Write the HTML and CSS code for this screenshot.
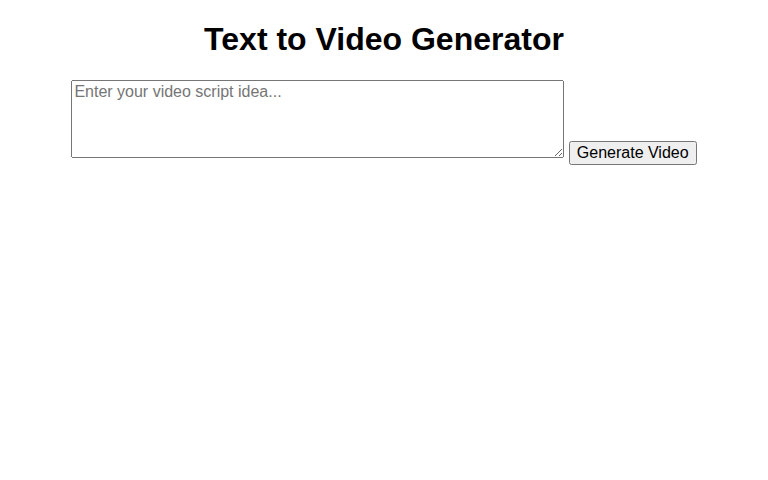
FILE: index.html
```html
<!DOCTYPE html>
<html lang="en">
<head>
<meta charset="utf-8">
<title>Text to Video Generator</title>
<link rel="stylesheet" href="styles.css">
</head>
<body>
<h1 class="title">Text to Video Generator</h1>
<div class="form">
<textarea class="script" placeholder="Enter your video script idea..."></textarea>
<button class="generate">Generate Video</button>
</div>
</body>
</html>
```
FILE: styles.css
```css
body {
  margin: 0;
  font-family: "Liberation Sans", Arial, sans-serif;
  text-align: center;
  background: #fff;
  color: #000;
}
.title {
  font-size: 32px;
  margin: 21.44px 0;
}
.script {
  box-sizing: border-box;
  width: 493px;
  height: 78px;
  font-family: "Liberation Sans", Arial, sans-serif;
  font-size: 16px;
  padding: 2px;
  margin: 0;
  vertical-align: baseline;
}
.generate {
  font-family: "Liberation Sans", Arial, sans-serif;
  font-size: 16px;
}
```
